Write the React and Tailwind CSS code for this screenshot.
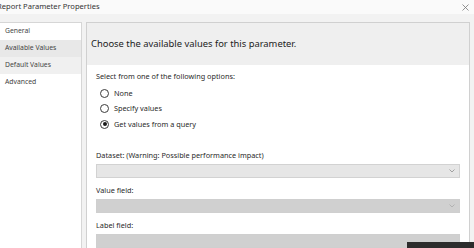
import React from "react";

const font = { fontFamily: '"Noto Sans", "Open Sans", sans-serif' };

function Radio({ label, checked }) {
  return (
    <div className="flex h-[15.5px] items-center gap-[5px] pl-[4px]">
      <span className="flex h-[9px] w-[9px] items-center justify-center rounded-full border border-[#3c3c3c] bg-white">
        {checked && <span className="h-[4px] w-[4px] rounded-full bg-[#1a1a1a]" />}
      </span>
      <span className="text-[7.3px] text-[#2a2a2a]">{label}</span>
    </div>
  );
}

function Dropdown({ disabled, chevron = true }) {
  return (
    <div
      className={
        "mt-[3px] flex h-[14px] items-center justify-end border pr-[4px] " +
        (disabled ? "border-[#cfcfcf] bg-[#d0d0d0]" : "border-[#d2d2d2] bg-[#e6e6e6]")
      }
    >
      {chevron && (
        <svg width="6" height="4" viewBox="0 0 6 4" className={disabled ? "opacity-30" : "opacity-60"}>
          <path d="M0.5 0.5 L3 3 L5.5 0.5" fill="none" stroke="#555" strokeWidth="0.8" />
        </svg>
      )}
    </div>
  );
}

function Field({ label, disabled, chevron }) {
  return (
    <div className="mt-[6px]">
      <div className="flex h-[12px] items-center text-[7.3px] text-[#2a2a2a]">{label}</div>
      <Dropdown disabled={disabled} chevron={chevron} />
    </div>
  );
}

const navItems = [
  { label: "General", bg: "" },
  { label: "Available Values", bg: "bg-[#e8e8e8]" },
  { label: "Default Values", bg: "bg-[#f0f0f0]" },
  { label: "Advanced", bg: "" },
];

export default function App() {
  return (
    <div className="relative h-[248px] w-[474px] overflow-hidden bg-[#f2f2f2]" style={font}>
      <div className="flex h-[14px] items-center justify-between bg-[#fafafa] pr-[5px]">
        <span className="ml-[-3px] text-[7.6px] text-[#333]">Report Parameter Properties</span>
        <svg width="7" height="7" viewBox="0 0 7 7">
          <path d="M0.5 0.5 L6.5 6.5 M6.5 0.5 L0.5 6.5" stroke="#777" strokeWidth="0.8" />
        </svg>
      </div>

      <div className="mt-[8px] flex h-[226px] gap-[4px] pr-[4px]">
        <div className="w-[82px] border-t border-r border-[#d6d6d6] bg-white">
          {navItems.map((item) => (
            <div key={item.label} className={"flex h-[17px] items-center pl-[5px] text-[6.8px] text-[#444] " + item.bg}>
              {item.label}
            </div>
          ))}
        </div>

        <div className="flex flex-1 flex-col border-x border-t border-[#d0d0d0] bg-white">
          <div className="flex h-[42px] items-center bg-[#efefef] pl-[4px] text-[9.4px] text-[#222]">
            Choose the available values for this parameter.
          </div>
          <div className="px-[9px] pt-[6px]">
            <div className="flex h-[12px] items-center text-[7.3px] text-[#2a2a2a]">
              Select from one of the following options:
            </div>
            <div className="mt-[3px]">
              <Radio label="None" />
              <Radio label="Specify values" />
              <Radio label="Get values from a query" checked />
            </div>
            <div className="mt-[17px]">
              <Field label="Dataset: (Warning: Possible performance impact)" />
              <Field label="Value field:" disabled />
              <Field label="Label field:" disabled chevron={false} />
            </div>
          </div>
        </div>
      </div>

      <div className="absolute bottom-0 right-0 h-[6px] w-[67px] bg-[#2d2d2d]" />
    </div>
  );
}
